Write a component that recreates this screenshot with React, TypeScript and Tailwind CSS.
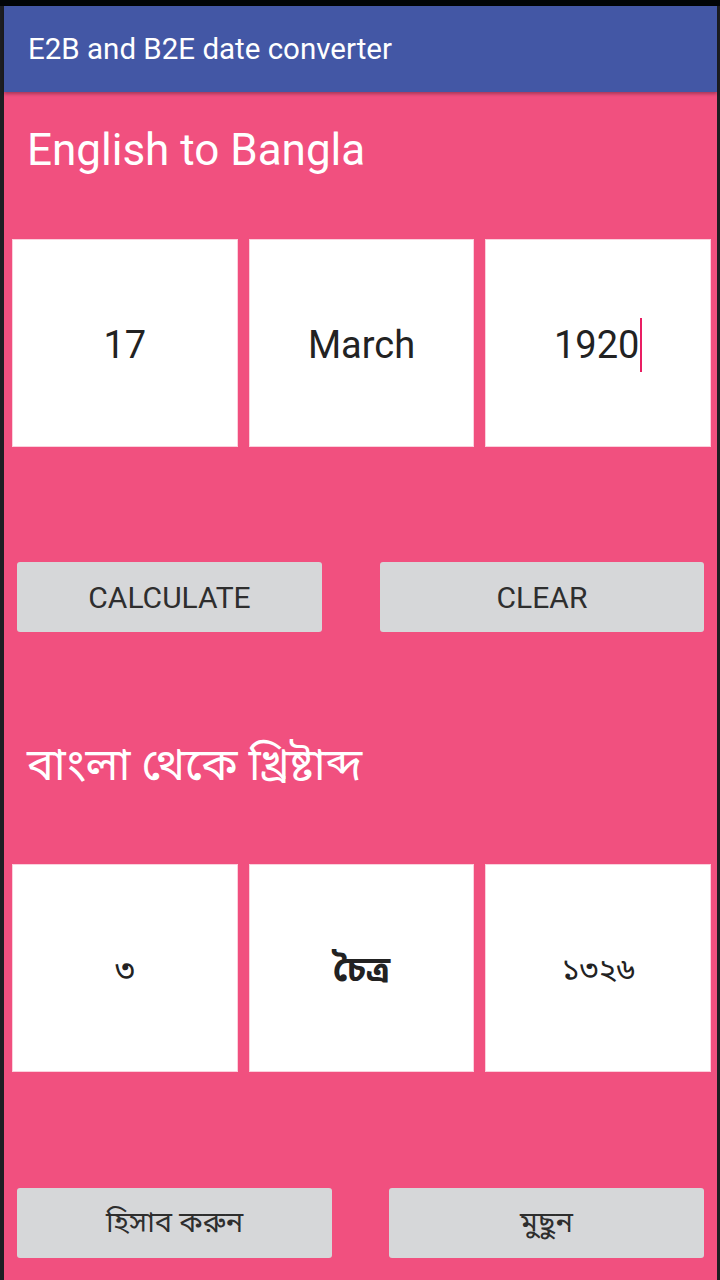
import React from "react";

const roboto = { fontFamily: "Roboto, 'Noto Sans', 'Noto Sans Bengali', sans-serif" };

function DateBox({ children, bold = false, size = "text-[38px]" }: { children: React.ReactNode; bold?: boolean; size?: string }) {
  return (
    <div className="h-[208px] bg-white border border-[#fbd0dd] flex items-center justify-center pt-[5px]">
      <span className={`${size} text-[#222222] ${bold ? "font-bold" : "font-normal"}`}>{children}</span>
    </div>
  );
}

export default function App() {
  return (
    <div className="w-[720px] h-[1280px] bg-[#1d1e22] flex flex-col overflow-hidden" style={roboto}>
      {/* status strip */}
      <div className="h-[6px] bg-[#020507] shrink-0" />

      <div className="flex-1 flex flex-col pl-[4px] pr-[3px]">
        {/* toolbar */}
        <header className="relative z-10 h-[86px] bg-[#4357a5] flex items-center px-[24px] pt-[1px] shadow-[0_2px_3px_rgba(0,0,0,0.3)]">
          <h1 className="text-[29.5px] text-white">E2B and B2E date converter</h1>
        </header>

        <main className="flex-1 bg-[#f1507f] flex flex-col">
          <h2 className="pt-[30px] pl-[23px] leading-[56px] text-[44px] text-white">English to Bangla</h2>

          <div className="mt-[61px] pl-[8px] pr-[6px] grid grid-cols-3 gap-[11px]">
            <DateBox>17</DateBox>
            <DateBox>March</DateBox>
            <DateBox>
              <span className="inline-flex items-center">
                1920
                <span className="inline-block w-[2px] h-[54px] bg-[#e91e63] ml-[1px] translate-y-[-1px]" />
              </span>
            </DateBox>
          </div>

          <div className="mt-[115px] flex">
            <button className="ml-[13px] w-[305px] h-[70px] bg-[#d6d7d9] rounded-[3px] text-[30px] text-[#2e2e2e] uppercase">
              Calculate
            </button>
            <button className="ml-[58px] w-[324px] h-[70px] bg-[#d6d7d9] rounded-[3px] text-[30px] text-[#2e2e2e] uppercase">
              Clear
            </button>
          </div>

          <h2 className="mt-[105px] pl-[23px] leading-[56px] text-[45px] text-white">বাংলা থেকে খ্রিষ্টাব্দ</h2>

          <div className="mt-[71px] pl-[8px] pr-[6px] grid grid-cols-3 gap-[11px]">
            <DateBox size="text-[33px]">৩</DateBox>
            <DateBox size="text-[35px]" bold>চৈত্র</DateBox>
            <DateBox size="text-[31px]">১৩২৬</DateBox>
          </div>

          <div className="mt-[116px] flex">
            <button className="ml-[13px] w-[315px] h-[70px] bg-[#d6d7d9] rounded-[3px] text-[29px] text-[#2e2e2e]">
              হিসাব করুন
            </button>
            <button className="ml-[57px] w-[315px] h-[70px] bg-[#d6d7d9] rounded-[3px] text-[29px] text-[#2e2e2e]">
              মুছুন
            </button>
          </div>
        </main>
      </div>
    </div>
  );
}
